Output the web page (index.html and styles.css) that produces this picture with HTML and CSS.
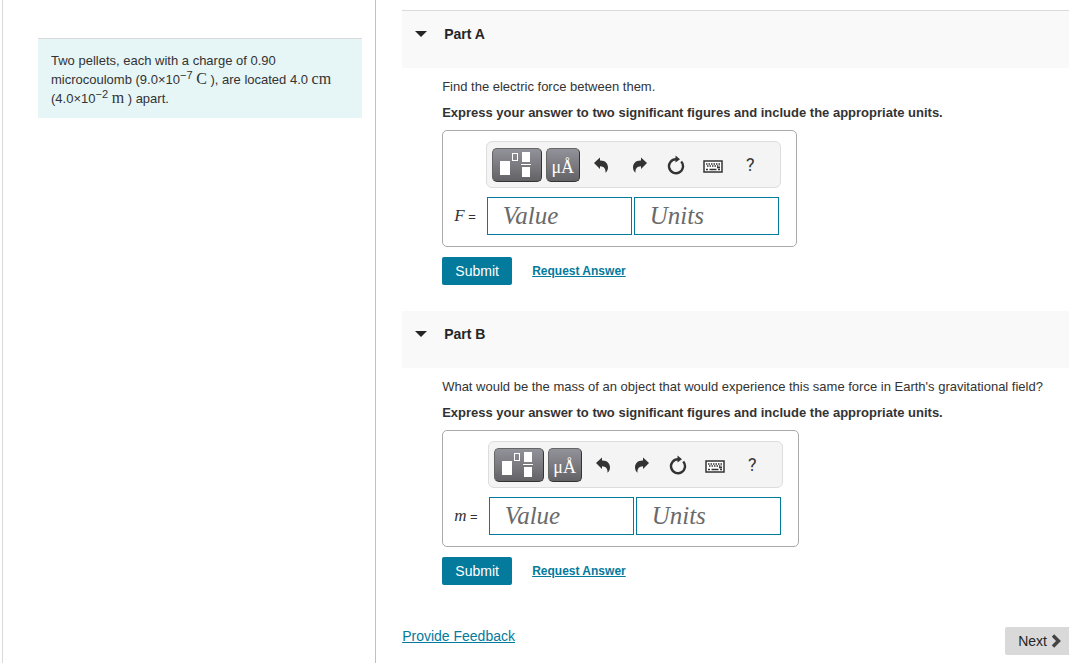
FILE: index.html
```html
<!DOCTYPE html>
<html lang="en">
<head>
  <meta charset="UTF-8" />
  <meta name="viewport" content="width=device-width, initial-scale=1.0"/>
  <title>Electric force between pellets</title>
  <link rel="stylesheet" href="styles.css">
</head>
<body>
  <!-- shared icons -->
  <svg class="sprite" aria-hidden="true">
    <symbol id="icon-templates" viewBox="0 0 34 26">
      <rect x="0" y="9" width="10" height="14" fill="#fff"/>
      <rect x="12.5" y="1.5" width="5" height="7" fill="none" stroke="#fff"/>
      <rect x="22" y="0" width="8" height="10" fill="#fff"/>
      <rect x="21" y="12" width="10" height="1" fill="#fff"/>
      <rect x="22" y="15" width="8" height="10" fill="#fff"/>
    </symbol>
    <symbol id="icon-undo" viewBox="0 0 16 16">
      <path d="M0 6 6 0.5V3.5C11 3.3 14 6.2 14 10.5 14 12.5 13 14.5 11.5 15.8 11.8 11.5 10 9.4 6 9.2V12Z" fill="#333"/>
    </symbol>
    <symbol id="icon-reset" viewBox="0 0 18 20">
      <path d="M9 4.2A7 7 0 1 0 14.2 6.5" fill="none" stroke="#333" stroke-width="2.4"/>
      <path d="M8.5 0.5 13 4.2 8.5 7.5Z" fill="#333"/>
    </symbol>
    <symbol id="icon-keyboard" viewBox="0 0 20 13">
      <rect x="1" y="1" width="18" height="11" fill="#fff" stroke="#333" stroke-width="1.5"/>
      <path d="M3 4H17M4 6H17" stroke="#333" stroke-width="1.5" stroke-dasharray="1.5 1"/>
      <path d="M3 9.5H5M6.5 9.5H13.5M15 9.5H17M14 7.5H17" stroke="#333" stroke-width="1.5"/>
    </symbol>
  </svg>

  <div class="page">
    <aside class="sidebar">
      <div class="problem">
        Two pellets, each with a charge of 0.90 microcoulomb (9.0×10<sup>−7</sup> <span class="unit">C</span> ), are located 4.0 <span class="unit">cm</span> (4.0×10<sup>−2</sup> <span class="unit">m</span> ) apart.
      </div>
    </aside>

    <main class="content">
      <section class="part">
        <header class="part-header part-header-first">
          <button class="toggle" aria-label="Collapse Part A"></button>
          <h2>Part A</h2>
        </header>
        <div class="part-body">
          <p>Find the electric force between them.</p>
          <p class="instructions">Express your answer to two significant figures and include the appropriate units.</p>
          <div class="answer">
            <div class="toolbar">
              <button class="tool-dark tool-wide" aria-label="Templates"><svg width="34" height="26"><use href="#icon-templates"/></svg></button>
              <button class="tool-dark tool-symbols" aria-label="Symbols">μÅ</button>
              <button class="tool" aria-label="Undo"><svg width="16" height="16"><use href="#icon-undo"/></svg></button>
              <button class="tool" aria-label="Redo"><svg class="flip" width="16" height="16"><use href="#icon-undo"/></svg></button>
              <button class="tool" aria-label="Reset"><svg width="18" height="20"><use href="#icon-reset"/></svg></button>
              <button class="tool tool-keyboard" aria-label="Keyboard shortcuts"><svg width="20" height="13"><use href="#icon-keyboard"/></svg></button>
              <button class="tool" aria-label="Help">?</button>
            </div>
            <label class="variable" for="valueA"><i>F</i> =</label>
            <div class="fields">
              <input type="text" id="valueA" placeholder="Value">
              <input type="text" id="unitsA" placeholder="Units" aria-label="Units">
            </div>
          </div>
          <div class="actions">
            <button class="submit">Submit</button>
            <a href="#" class="request">Request Answer</a>
          </div>
        </div>
      </section>

      <section class="part">
        <header class="part-header">
          <button class="toggle" aria-label="Collapse Part B"></button>
          <h2>Part B</h2>
        </header>
        <div class="part-body">
          <p>What would be the mass of an object that would experience this same force in Earth's gravitational field?</p>
          <p class="instructions">Express your answer to two significant figures and include the appropriate units.</p>
          <div class="answer">
            <div class="toolbar">
              <button class="tool-dark tool-wide" aria-label="Templates"><svg width="34" height="26"><use href="#icon-templates"/></svg></button>
              <button class="tool-dark tool-symbols" aria-label="Symbols">μÅ</button>
              <button class="tool" aria-label="Undo"><svg width="16" height="16"><use href="#icon-undo"/></svg></button>
              <button class="tool" aria-label="Redo"><svg class="flip" width="16" height="16"><use href="#icon-undo"/></svg></button>
              <button class="tool" aria-label="Reset"><svg width="18" height="20"><use href="#icon-reset"/></svg></button>
              <button class="tool tool-keyboard" aria-label="Keyboard shortcuts"><svg width="20" height="13"><use href="#icon-keyboard"/></svg></button>
              <button class="tool" aria-label="Help">?</button>
            </div>
            <label class="variable" for="valueB"><i>m</i> =</label>
            <div class="fields">
              <input type="text" id="valueB" placeholder="Value">
              <input type="text" id="unitsB" placeholder="Units" aria-label="Units">
            </div>
          </div>
          <div class="actions">
            <button class="submit">Submit</button>
            <a href="#" class="request">Request Answer</a>
          </div>
        </div>
      </section>

      <footer class="footer">
        <a href="#">Provide Feedback</a>
        <button class="next">Next
          <svg width="10" height="14" viewBox="0 0 10 14" aria-hidden="true"><path d="M2 1.5 7.5 7 2 12.5" fill="none" stroke="#444" stroke-width="3.4"/></svg>
        </button>
      </footer>
    </main>
  </div>
</body>
</html>
```
FILE: styles.css
```css
* {
  box-sizing: border-box;
}

body {
  margin: 0;
  font-family: "Liberation Sans", Arial, sans-serif;
  font-size: 13px;
  line-height: 18px;
  color: #333;
  background: #fff;
}

button, input {
  font-family: inherit;
  margin: 0;
}

a {
  color: #047a9c;
}

.sprite {
  display: none;
}

.page {
  display: flex;
  min-height: 100vh;
}

/* problem statement */
.sidebar {
  flex: 0 0 35%;
  margin-left: 2px;
  padding: 38px 13px 0 35px;
  border-left: 1px solid #d9d9d9;
  border-right: 1px solid #bcc2c8;
}

.problem {
  padding: 12px 13px 10px;
  line-height: 19px;
  background: #e6f5f6;
  border-top: 1px solid #d9d9d9;
}

.problem sup {
  font-size: 11px;
  line-height: 0;
  vertical-align: 5px;
}

.unit {
  font-family: "Liberation Serif", "Times New Roman", serif;
  font-size: 16px;
  line-height: 16px;
}

/* parts */
.content {
  flex: 1;
  min-width: 0;
  padding: 10px 0 0 26px;
}

.part-header {
  display: flex;
  align-items: flex-start;
  height: 57px;
  padding: 14px 13px;
  background: #f9f9f9;
}

.part-header-first {
  height: 58px;
  border-top: 1px solid #d9d9d9;
}

.part-header h2 {
  margin: 0 0 0 17px;
  font-size: 14px;
  line-height: 18px;
  color: #252525;
}

.toggle {
  width: 12px;
  height: 18px;
  padding: 0;
  background: none;
  border: 0;
}

.toggle::before {
  content: "";
  display: block;
  border: 6px solid transparent;
  border-top-color: #252525;
  border-bottom: 0;
}

.part-body {
  padding: 10px 0 26px 40px;
}

.part-body p {
  margin: 0 0 8px;
}

.instructions {
  font-weight: bold;
}

.answer {
  display: grid;
  grid-template-columns: auto auto;
  gap: 9px 10px;
  width: fit-content;
  padding: 10px 15px 11px 11px;
  border: 1px solid #aaa;
  border-radius: 5px;
}

.toolbar {
  grid-column: 2;
  display: flex;
  align-items: center;
  width: 295px;
  height: 47px;
  padding: 0 5px;
  background: #f4f4f4;
  border: 1px solid #ddd;
  border-radius: 6px;
}

.tool-dark {
  display: flex;
  align-items: center;
  justify-content: center;
  width: 34px;
  height: 34px;
  margin-right: 4px;
  padding: 0;
  font-family: "Liberation Serif", "Times New Roman", serif;
  font-size: 18px;
  color: #fff;
  background: linear-gradient(#92929a, #636366);
  border: 1px solid #333;
  border-top-color: #666;
  border-left-color: #666;
  border-radius: 5px;
}

.tool-wide {
  width: 50px;
}

.tool-symbols {
  padding-top: 5px;
}

.tool {
  display: flex;
  align-items: center;
  justify-content: center;
  width: 37px;
  height: 34px;
  padding: 0;
  font-family: Roboto, sans-serif;
  font-size: 18px;
  color: #333;
  background: none;
  border: 0;
}

.tool-keyboard {
  padding-top: 4px;
}

.flip {
  transform: scaleX(-1);
}

.variable {
  align-self: center;
  text-align: right;
}

.variable i {
  font-family: "Liberation Serif", "Times New Roman", serif;
  font-size: 17px;
}

.fields {
  display: flex;
  gap: 2px;
  padding-left: 1px;
}

.fields input {
  width: 145px;
  height: 38px;
  padding: 0 15px;
  font-family: "Liberation Serif", "Times New Roman", serif;
  font-size: 25px;
  font-style: italic;
  color: #333;
  background: #fff;
  border: 1px solid #047a9c;
  border-radius: 0;
}

.fields input::placeholder {
  color: #6a6a6a;
}

.actions {
  display: flex;
  align-items: center;
  gap: 20px;
  margin-top: 10px;
}

.submit {
  width: 70px;
  height: 28px;
  padding: 0;
  font-size: 14px;
  color: #fff;
  background: #047a9c;
  border: 0;
  border-radius: 2px;
}

.request {
  font-size: 12px;
  font-weight: bold;
}

.footer {
  display: flex;
  justify-content: space-between;
  padding: 16px 0 8px;
  font-size: 14px;
}

.next {
  display: flex;
  align-items: center;
  gap: 4px;
  height: 28px;
  padding: 0 8px 0 13px;
  font-size: 14px;
  color: #252525;
  background: #d9d9d9;
  border: 0;
  border-radius: 2px 0 0 2px;
}
```
